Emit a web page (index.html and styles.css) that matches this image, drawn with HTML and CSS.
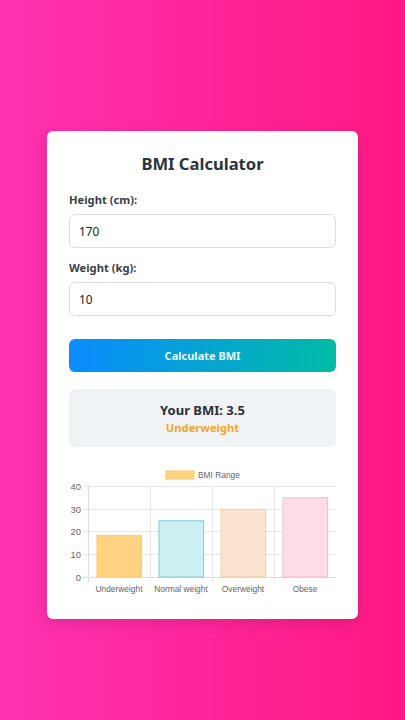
FILE: index.html
```html
<!DOCTYPE html>
<html lang="en">
<head>
<meta charset="utf-8">
<title>BMI Calculator</title>
<link rel="stylesheet" href="styles.css">
</head>
<body>
<main class="page">
  <section class="card">
    <h1 class="title">BMI Calculator</h1>
    <label class="label" for="height">Height (cm):</label>
    <input class="field" id="height" type="text" value="170">
    <label class="label label-second" for="weight">Weight (kg):</label>
    <input class="field" id="weight" type="text" value="10">
    <button class="calc-btn" type="button">Calculate BMI</button>
    <div class="result">
      <div class="result-value">Your BMI: 3.5</div>
      <div class="result-cat">Underweight</div>
    </div>
    <div class="chart">
      <svg class="chart-svg" width="267" height="134" viewBox="0 0 267 134" xmlns="http://www.w3.org/2000/svg">
        <rect x="97" y="6" width="28" height="8" fill="#ffd382" stroke="#ffc86a" stroke-width="1"/>
        <text x="129" y="12.5" class="ct">BMI Range</text>
        <g stroke="#e8e8e8" stroke-width="1">
          <line x1="14" y1="21.5" x2="267" y2="21.5"/>
          <line x1="14" y1="44.5" x2="267" y2="44.5"/>
          <line x1="14" y1="66.5" x2="267" y2="66.5"/>
          <line x1="14" y1="89.5" x2="267" y2="89.5"/>
          <line x1="81.5" y1="21" x2="81.5" y2="117"/>
          <line x1="143.5" y1="21" x2="143.5" y2="117"/>
          <line x1="205.5" y1="21" x2="205.5" y2="117"/>
        </g>
        <g stroke="#dcdcdc" stroke-width="1">
          <line x1="19.5" y1="21" x2="19.5" y2="117"/>
          <line x1="14" y1="112.5" x2="267" y2="112.5"/>
        </g>
        <g class="ct cty" text-anchor="end">
          <text x="12" y="24.8">40</text>
          <text x="12" y="47.6">30</text>
          <text x="12" y="70.3">20</text>
          <text x="12" y="93">10</text>
          <text x="12" y="115.8">0</text>
        </g>
        <rect x="28" y="70.4" width="44.6" height="41.6" fill="#ffd382" stroke="#ffc86a" stroke-width="1"/>
        <rect x="90" y="55.8" width="44.6" height="56.2" fill="#cdf0f3" stroke="#74cfd5" stroke-width="1"/>
        <rect x="152" y="44.4" width="44.6" height="67.6" fill="#fde4d1" stroke="#fccb9f" stroke-width="1"/>
        <rect x="214" y="32.8" width="44.6" height="79.2" fill="#ffdde6" stroke="#f6b9cb" stroke-width="1"/>
        <g class="ct" text-anchor="middle">
          <text x="50" y="127">Underweight</text>
          <text x="112" y="127">Normal weight</text>
          <text x="174" y="127">Overweight</text>
          <text x="236" y="127">Obese</text>
        </g>
      </svg>
    </div>
  </section>
</main>
</body>
</html>
```
FILE: styles.css
```css
* { box-sizing: border-box; }
html, body { margin: 0; padding: 0; }
body {
  font-family: "Noto Sans", "Open Sans", sans-serif;
  background: linear-gradient(to right, #fe32b2, #ff1883);
  min-height: 720px;
}
.page {
  min-height: 720px;
  display: flex;
  justify-content: center;
  align-items: flex-start;
  padding-top: 131px;
}
.card {
  width: 311px;
  background: #ffffff;
  border-radius: 6px;
  box-shadow: 0 4px 14px rgba(0, 0, 0, 0.12);
  padding: 20px 22px 20px 22px;
  display: flex;
  flex-direction: column;
}
.title {
  margin: 0 0 15px 0;
  font-size: 16.6px;
  line-height: 26px;
  font-weight: 700;
  text-align: center;
  color: #2b3340;
}
.label {
  display: block;
  font-size: 11.2px;
  line-height: 16px;
  font-weight: 700;
  color: #3a3f47;
  margin-bottom: 6px;
}
.label-second { margin-top: 12px; }
.field {
  display: block;
  width: 100%;
  height: 34px;
  border: 1px solid #dddddd;
  border-radius: 6px;
  padding: 0 9px;
  font-family: "Noto Sans", "Open Sans", sans-serif;
  font-size: 11.8px;
  color: #222;
  background: #fff;
  outline: none;
}
.calc-btn {
  margin-top: 23px;
  height: 33px;
  width: 100%;
  border: none;
  border-radius: 6px;
  background: linear-gradient(to right, #0a8cff, #00bba6);
  color: #e8fbff;
  font-family: "Noto Sans", "Open Sans", sans-serif;
  font-size: 11px;
  font-weight: 700;
}
.result {
  margin-top: 17px;
  height: 58px;
  background: #f0f3f5;
  border-radius: 6px;
  padding-top: 11px;
  text-align: center;
}
.result-value {
  font-size: 13px;
  line-height: 20px;
  font-weight: 700;
  color: #2b3038;
}
.result-cat {
  font-size: 11.2px;
  line-height: 16px;
  font-weight: 700;
  color: #f5a72a;
}
.chart {
  margin-top: 18px;
  height: 134px;
}
.chart-svg { display: block; }
.ct {
  font-family: "Liberation Sans", Arial, sans-serif;
  font-size: 8.4px;
  fill: #666666;
}
.cty { font-size: 9.4px; }
```
